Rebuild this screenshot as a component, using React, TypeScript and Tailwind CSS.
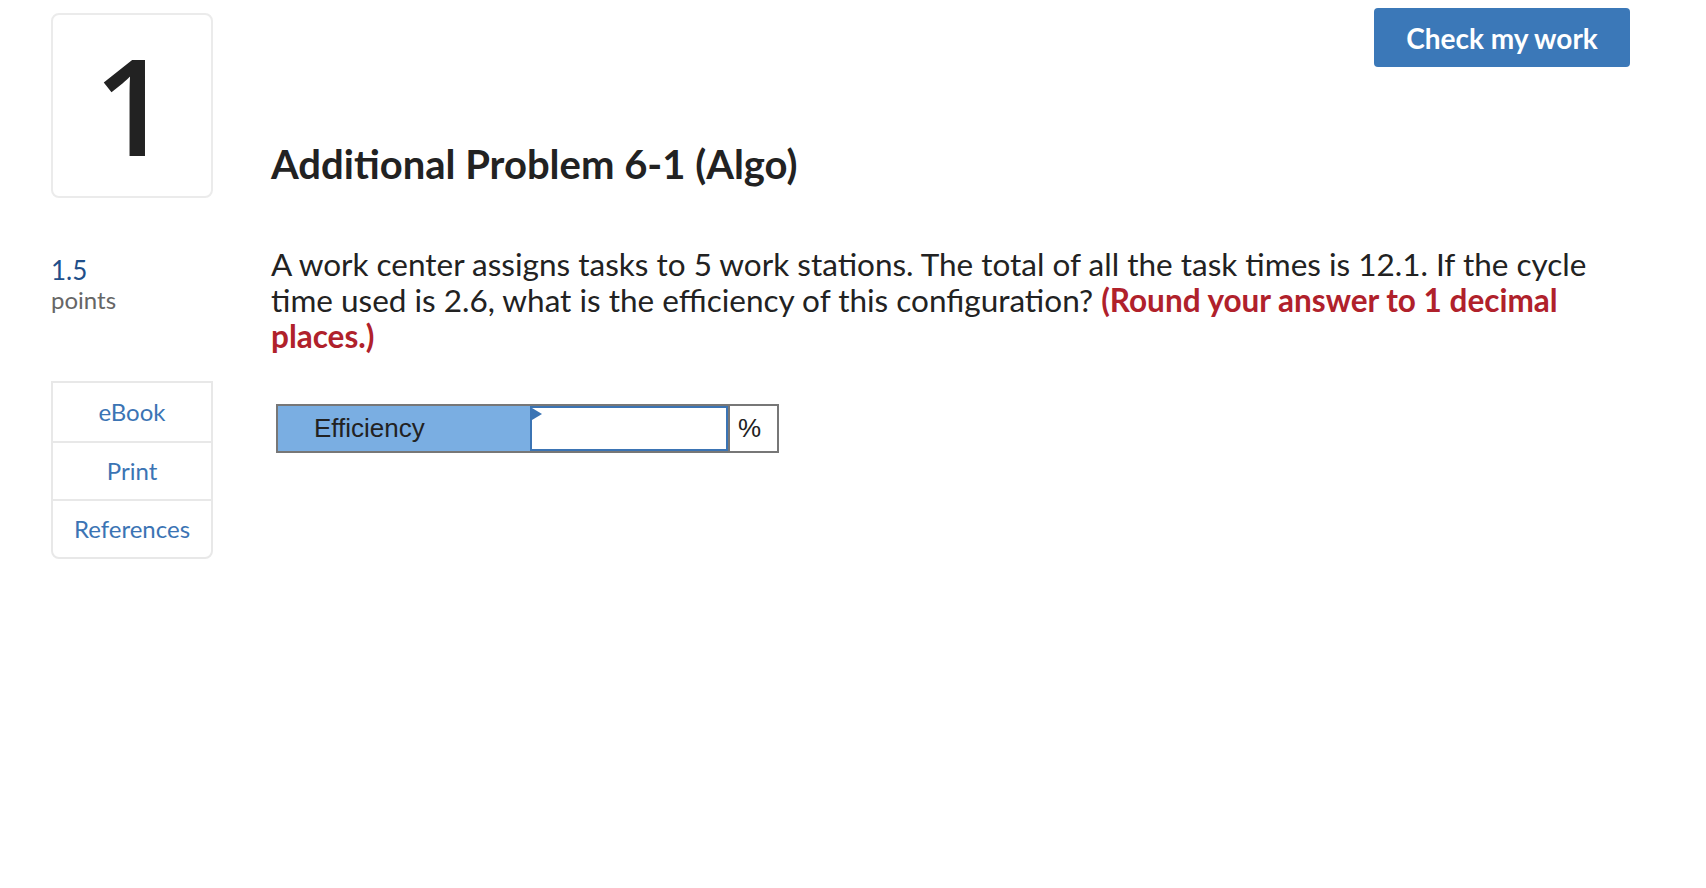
import React from 'react';

const sans = { fontFamily: 'Lato, "Noto Sans", sans-serif' };

function SideLinks() {
  const links = ['eBook', 'Print', 'References'];
  return (
    <div className="mt-[66px] flex w-[162px] flex-col rounded-b-lg border-2 border-[#e8e8e8]">
      {links.map((l, i) => (
        <div
          key={l}
          className={`flex items-center justify-center text-[24px] text-[#3b74b4] ${
            i === 0 ? 'h-[58px]' : 'h-[58px] border-t-2 border-[#e8e8e8]'
          }`}
        >
          {l}
        </div>
      ))}
    </div>
  );
}

function AnswerTable() {
  return (
    <div
      className="ml-[5px] mt-[50px] flex h-[49px] w-[503px] border-2 border-[#777777]"
      style={{ fontFamily: '"Liberation Sans", Arial, sans-serif' }}
    >
      <div className="flex w-[252px] items-center bg-[#7aaee2] pl-[36px] text-[26px] text-[#222]">
        Efficiency
      </div>
      <div className="relative w-[198px] border-2 border-[#3b74b4] bg-white">
        <div className="absolute left-0 top-0 h-0 w-0 border-l-[10px] border-t-[6px] border-b-[6px] border-l-[#3b74b4] border-t-transparent border-b-transparent" />
      </div>
      <div className="flex flex-1 items-center border-l-2 border-[#777777] pl-2 text-[26px] text-[#222]">
        %
      </div>
    </div>
  );
}

export default function App() {
  return (
    <div className="min-h-screen bg-white text-[#222]" style={sans}>
      <div className="flex pl-[51px] pr-[76px]">
        <div className="flex w-[162px] shrink-0 flex-col pt-[13px]">
          <div
            className="flex h-[185px] w-[162px] items-center justify-center rounded-lg border-2 border-[#ebebeb] pb-1 text-[134px] font-semibold leading-none text-[#222]"
            style={{ fontFamily: '"Open Sans", sans-serif' }}
          >
            1
          </div>
          <div className="mt-[57px] text-[26px] leading-[30px] text-[#1f4f8a]">1.5</div>
          <div className="text-[24px] leading-[30px] text-[#666]">points</div>
          <SideLinks />
        </div>
        <div className="ml-[58px] flex flex-1 flex-col pt-2">
          <div className="flex justify-end">
            <button className="h-[59px] w-[256px] rounded bg-[#3b78b8] text-[28px] font-bold text-white">
              Check my work
            </button>
          </div>
          <h1 className="mt-[73px] text-[40px] font-bold leading-[48px] text-[#222]">
            Additional Problem 6-1 (Algo)
          </h1>
          <p className="mt-[58px] text-[31.5px] leading-[36px] text-[#222]">
            A work center assigns tasks to 5 work stations. The total of all the task times is 12.1. If the cycle
            time used is 2.6, what is the efficiency of this configuration?{' '}
            <strong className="font-bold text-[#b0212b]">(Round your answer to 1 decimal places.)</strong>
          </p>
          <AnswerTable />
        </div>
      </div>
    </div>
  );
}
